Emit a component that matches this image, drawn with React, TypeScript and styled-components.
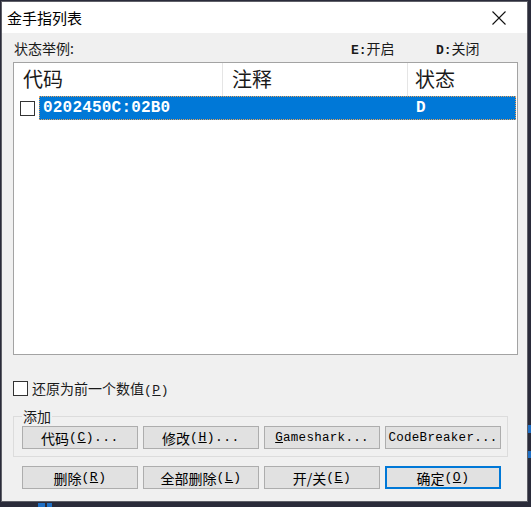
import React from "react";
import styled, { createGlobalStyle } from "styled-components";

const CJK = `"Noto Sans CJK SC", "Noto Sans", sans-serif`;
const MONO = `"Liberation Mono", "DejaVu Sans Mono", monospace`;

const Global = createGlobalStyle`
  html, body { margin: 0; padding: 0; background: #2a2b3a; }
  body { width: 531px; height: 507px; overflow: hidden; font-family: ${CJK}; }
  * { box-sizing: border-box; }
`;

const Desktop = styled.div`
  position: relative;
  width: 531px;
  height: 507px;
  padding: 1px 0 0 1px;
`;

const TaskbarBit = styled.span<{ $x: number; $y: number; $w: number; $h: number }>`
  position: absolute;
  left: ${(p) => p.$x}px;
  top: ${(p) => p.$y}px;
  width: ${(p) => p.$w}px;
  height: ${(p) => p.$h}px;
  background: #1f6fc4;
`;

const Window = styled.div`
  width: 527px;
  height: 501px;
  border: 1px solid #5f6068;
  background: #f0f0f0;
  display: flex;
  flex-direction: column;
`;

const TitleBar = styled.div`
  height: 31px;
  flex: none;
  background: #ffffff;
  display: flex;
  align-items: center;
  justify-content: space-between;
  padding: 0 21px 0 5px;
  font-family: ${CJK};
  font-size: 15px;
  color: #000;
`;

const CloseIcon = styled.svg`
  width: 14px;
  height: 14px;
  display: block;
`;

const Body = styled.div`
  flex: 1;
  display: flex;
  flex-direction: column;
  padding: 5px 0 0 11px;
`;

const StatusRow = styled.div`
  height: 20px;
  display: grid;
  grid-template-columns: 337px 85px auto;
  align-items: center;
  font-size: 14px;
  color: #1a1a1a;
  padding-left: 1px;
`;

const Key = styled.span`
  font-family: ${MONO};
  font-weight: bold;
  font-size: 13px;
`;

const ListBox = styled.div`
  margin-top: 4px;
  width: 505px;
  height: 293px;
  background: #fff;
  border: 1px solid #a3a3a3;
  display: flex;
  flex-direction: column;
`;

const Header = styled.div`
  height: 33px;
  display: grid;
  grid-template-columns: 209px 185px 1fr;
`;

const HeaderCell = styled.div<{ $pad: number; $last?: boolean }>`
  display: flex;
  align-items: center;
  padding-left: ${(p) => p.$pad}px;
  border-right: ${(p) => (p.$last ? "none" : "1px solid #e5e5e5")};
  font-size: 20px;
  color: #1a1a1a;
  padding-bottom: 2px;
`;

const Row = styled.div`
  height: 24px;
  display: flex;
  align-items: center;
  padding: 0 1px 0 6px;
  gap: 4px;
`;

const Box = styled.span<{ $size: number }>`
  width: ${(p) => p.$size}px;
  height: ${(p) => p.$size}px;
  flex: none;
  border: 1px solid #333;
  background: #fff;
`;

const Selected = styled.div`
  flex: 1;
  height: 24px;
  background: #0078d7;
  border: 1px dotted #e8a25a;
  display: grid;
  grid-template-columns: 373px 1fr;
  align-items: center;
  padding-left: 3px;
  color: #fff;
  font-family: ${MONO};
  font-weight: bold;
  font-size: 16px;
  letter-spacing: 0.2px;
`;

const CheckRow = styled.label`
  margin-top: 23px;
  height: 20px;
  display: flex;
  align-items: center;
  gap: 4px;
  font-size: 14px;
  color: #1a1a1a;
`;

const Accel = styled.span`
  font-family: ${MONO};
  font-size: 13px;
  letter-spacing: 0.5px;
`;

const Group = styled.fieldset`
  margin: 10px 0 0 0;
  width: 495px;
  border: 1px solid #dcdcdc;
  padding: 2px 8px 7px 8px;
  min-width: 0;
`;

const Legend = styled.legend`
  font-size: 14px;
  line-height: 16px;
  padding: 0 1px;
  color: #1a1a1a;
`;

const ButtonRow = styled.div<{ $indent?: number; $top?: number }>`
  display: grid;
  grid-template-columns: repeat(4, 116px);
  column-gap: 5px;
  padding-left: ${(p) => p.$indent ?? 0}px;
  margin-top: ${(p) => p.$top ?? 0}px;
`;

const Button = styled.button<{ $default?: boolean }>`
  height: 23px;
  padding: 0;
  background: #e1e1e1;
  border: ${(p) => (p.$default ? "2px solid #0078d7" : "1px solid #adadad")};
  font-family: ${CJK};
  font-size: 14px;
  color: #000;
  display: flex;
  align-items: center;
  justify-content: center;
  white-space: nowrap;
`;

const MonoLabel = styled.span`
  font-family: ${MONO};
  font-size: 12.5px;
  letter-spacing: 0.3px;
`;

export default function App() {
  return (
    <>
      <Global />
      <Desktop>
        <Window>
          <TitleBar>
            <span>金手指列表</span>
            <CloseIcon viewBox="0 0 14 14">
              <path d="M0.5 0.5 L13.5 13.5 M13.5 0.5 L0.5 13.5" stroke="#111" strokeWidth="1.1" fill="none" />
            </CloseIcon>
          </TitleBar>
          <Body>
            <StatusRow>
              <span>状态举例:</span>
              <span>
                <Key>E:</Key>开启
              </span>
              <span>
                <Key>D:</Key>关闭
              </span>
            </StatusRow>
            <ListBox>
              <Header>
                <HeaderCell $pad={9}>代码</HeaderCell>
                <HeaderCell $pad={9}>注释</HeaderCell>
                <HeaderCell $pad={7} $last>
                  状态
                </HeaderCell>
              </Header>
              <Row>
                <Box $size={15} />
                <Selected>
                  <span>0202450C:02B0</span>
                  <span>D</span>
                </Selected>
              </Row>
            </ListBox>
            <CheckRow>
              <Box $size={15} />
              <span>
                还原为前一个数值
                <Accel>
                  (<u>P</u>)
                </Accel>
              </span>
            </CheckRow>
            <Group>
              <Legend>添加</Legend>
              <ButtonRow>
                <Button>
                  代码
                  <Accel>
                    (<u>C</u>)...
                  </Accel>
                </Button>
                <Button>
                  修改
                  <Accel>
                    (<u>H</u>)...
                  </Accel>
                </Button>
                <Button>
                  <MonoLabel>
                    <u>G</u>ameshark...
                  </MonoLabel>
                </Button>
                <Button>
                  <MonoLabel>CodeBreaker...</MonoLabel>
                </Button>
              </ButtonRow>
            </Group>
            <ButtonRow $indent={9} $top={9}>
              <Button>
                删除
                <Accel>
                  (<u>R</u>)
                </Accel>
              </Button>
              <Button>
                全部删除
                <Accel>
                  (<u>L</u>)
                </Accel>
              </Button>
              <Button>
                开/关
                <Accel>
                  (<u>E</u>)
                </Accel>
              </Button>
              <Button $default>
                确定
                <Accel>
                  (<u>O</u>)
                </Accel>
              </Button>
            </ButtonRow>
          </Body>
        </Window>
        <TaskbarBit $x={38} $y={503} $w={7} $h={4} />
        <TaskbarBit $x={47} $y={503} $w={5} $h={4} />
        <TaskbarBit $x={528} $y={425} $w={3} $h={8} />
        <TaskbarBit $x={528} $y={451} $w={3} $h={7} />
      </Desktop>
    </>
  );
}
